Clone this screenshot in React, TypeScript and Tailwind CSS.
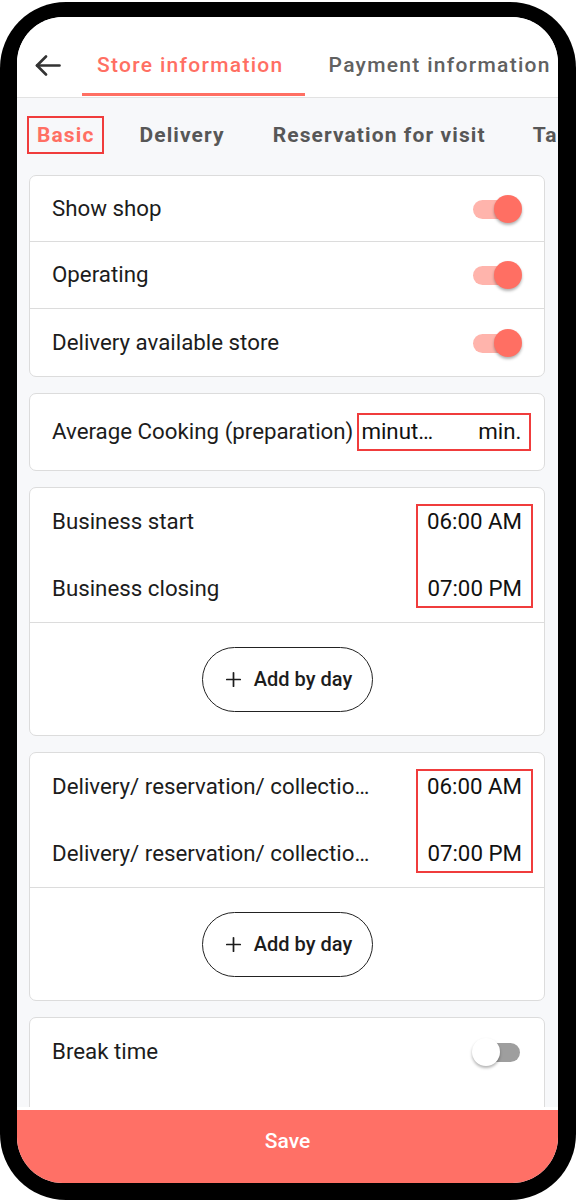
import { Plus } from "lucide-react";

const SALMON = "text-[#ff6f63]";

function Toggle({ on }: { on: boolean }) {
  return (
    <div className="relative w-[50px] h-[28px] shrink-0">
      <div
        className={
          "absolute left-[1px] right-[2px] top-[5px] h-[19px] rounded-full " +
          (on ? "bg-[#ffb4ac]" : "bg-[#9e9e9e]")
        }
      />
      <div
        className={
          "absolute top-0 w-[28px] h-[28px] rounded-full shadow-[0_2px_3px_rgba(0,0,0,0.3)] " +
          (on ? "right-0 bg-[#ff6f63]" : "left-0 bg-white")
        }
      />
    </div>
  );
}

function Card({ children }: { children: React.ReactNode }) {
  return (
    <div className="bg-white border border-[#dcdcdc] rounded-[7px] divide-y divide-[#dcdcdc]">
      {children}
    </div>
  );
}

function ToggleRow({ label, on }: { label: string; on: boolean }) {
  return (
    <div className="h-[67px] first:h-[66px] flex items-center justify-between px-[22px]">
      <span className="text-[22.3px] text-[#1c1c1c]">{label}</span>
      <Toggle on={on} />
    </div>
  );
}

function HoursCard({ start, end }: { start: string; end: string }) {
  return (
    <Card>
      <div className="flex justify-between px-[22px]">
        <div className="flex flex-col min-w-0">
          <div className="h-[67px] flex items-center">
            <span className="text-[22.3px] text-[#1c1c1c] whitespace-nowrap">{start}</span>
          </div>
          <div className="h-[67px] flex items-center">
            <span className="text-[22.3px] text-[#1c1c1c] whitespace-nowrap">{end}</span>
          </div>
        </div>
        <div className="relative flex flex-col items-end">
          <div className="h-[67px] flex items-center text-[22.3px] text-[#111]">06:00 AM</div>
          <div className="h-[67px] flex items-center text-[22.3px] text-[#111]">07:00 PM</div>
          <div className="absolute -left-[11px] -right-[11px] top-[16px] bottom-[14px] border-2 border-[#f03c3c]" />
        </div>
      </div>
      <div className="h-[112px] flex items-center justify-center">
        <button className="w-[171px] h-[65px] rounded-full border-[1.5px] border-[#222] flex items-center justify-center gap-[9px] text-[20px] font-medium text-[#1c1c1c]">
          <Plus size={23} strokeWidth={1.8} />
          Add by day
        </button>
      </div>
    </Card>
  );
}

export default function App() {
  return (
    <div className="w-[576px] h-[1202px] bg-white font-['Roboto',sans-serif]">
      <div className="mt-[2px] h-[1198px] bg-black rounded-[66px] pt-[15px] pb-[17px] pl-[17px] pr-[18px]">
        <div className="h-full rounded-[46px] overflow-hidden bg-[#f7f8fa] flex flex-col">
          {/* Header */}
          <header className="h-[81px] shrink-0 bg-white border-b border-[#e2e2e2] flex items-end pl-[18px] overflow-hidden">
            <div className="h-[80px] flex items-center pt-[17px] pr-[21px]">
              <svg width="26" height="21" viewBox="0 0 26 21" fill="none" stroke="#333" strokeWidth="2.6" strokeLinecap="round" strokeLinejoin="round">
                <path d="M24.5 10.5H2" />
                <path d="M11 1.5L2 10.5L11 19.5" />
              </svg>
            </div>
            <div className="flex flex-col items-center mb-[1px]">
              <span className={"text-[21px] font-medium tracking-[1.3px] leading-[24px] pb-[16px] pl-[15px] pr-[21px] whitespace-nowrap " + SALMON}>
                Store information
              </span>
              <div className="h-[3px] w-full bg-[#ff6f63]" />
            </div>
            <div className="flex flex-col items-center mb-[1px] pl-[24px]">
              <span className="text-[21px] font-medium tracking-[1.3px] leading-[24px] pb-[19px] whitespace-nowrap text-[#616161]">
                Payment information
              </span>
            </div>
          </header>

          {/* Content */}
          <div className="flex-1 overflow-hidden">
            <div className="flex items-center pt-[18px] pl-[10px] gap-[35px] whitespace-nowrap text-[21px] font-bold tracking-[1.1px] overflow-hidden">
              <span className={"h-[38px] flex items-center border-2 border-[#f03c3c] px-[8px] pt-[2px] " + SALMON}>Basic</span>
              <span className="text-[#575757] pt-[2px]">Delivery</span>
              <span className="text-[#575757] pl-[13px] pt-[2px]">Reservation for visit</span>
              <span className="text-[#575757] pl-[12px] pt-[2px]">Table</span>
            </div>

            <div className="flex flex-col gap-[16px] pl-[12px] pr-[13px] pt-[21px]">
              <Card>
                <ToggleRow label="Show shop" on />
                <ToggleRow label="Operating" on />
                <ToggleRow label="Delivery available store" on />
              </Card>

              <Card>
                <div className="h-[76px] flex items-center pl-[22px] pr-[12px]">
                  <span className="text-[22.3px] text-[#1c1c1c] whitespace-nowrap">Average Cooking (preparation)</span>
                  <div className="ml-[4px] w-[174px] h-[38px] border-2 border-[#f03c3c] flex items-center justify-between pl-[2px] pr-[8px] text-[22.3px] text-[#111]">
                    <span>minut…</span>
                    <span>min.</span>
                  </div>
                </div>
              </Card>

              <HoursCard start="Business start" end="Business closing" />
              <HoursCard start="Delivery/ reservation/ collectio…" end="Delivery/ reservation/ collectio…" />

              <div className="bg-white border border-[#dcdcdc] rounded-[7px] h-[160px]">
                <div className="h-[67px] flex items-center justify-between px-[22px]">
                  <span className="text-[22.3px] text-[#1c1c1c]">Break time</span>
                  <Toggle on={false} />
                </div>
              </div>
            </div>
          </div>

          {/* Save */}
          <div className="shrink-0 border-t-[3px] border-white">
            <button className="w-full h-[73px] pb-[10px] bg-[#ff7066] text-white text-[21px] font-medium">
              Save
            </button>
          </div>
        </div>
      </div>
    </div>
  );
}
